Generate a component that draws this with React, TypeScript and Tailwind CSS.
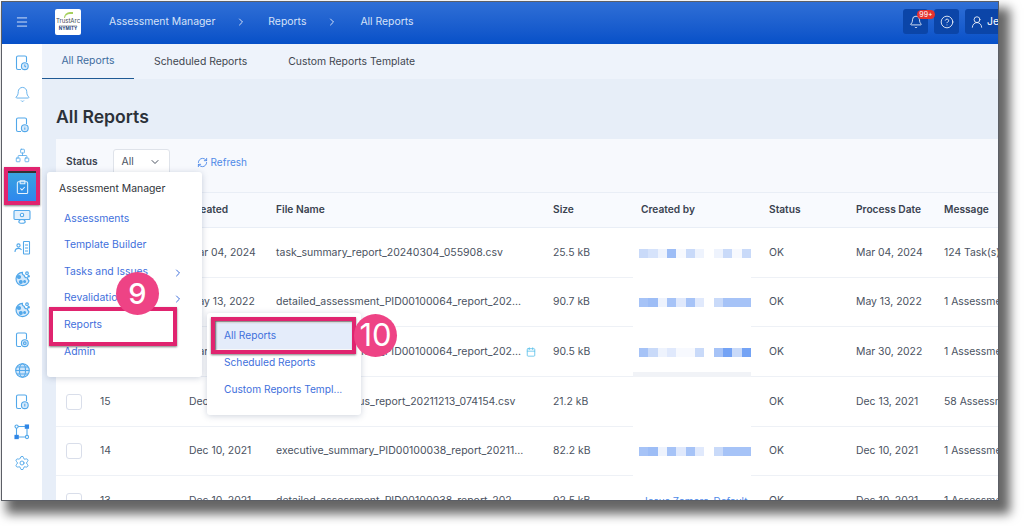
import { Menu, ChevronRight, ChevronDown, Bell, CircleHelp, UserRound, RefreshCw, Calendar, Settings, Network } from "lucide-react";

const font = "font-['Inter','Noto_Sans',sans-serif]";
const blue = "#52a8ea";

const FileBadge = ({ glyph }: { glyph: "clock" | "info" | "at" | "o" }) => (
  <svg width="16" height="16" viewBox="0 0 16 16" fill="none" stroke={blue} strokeWidth="1.1">
    <path d="M7 14.5H4a1.5 1.5 0 0 1-1.5-1.5V2.5A1.5 1.5 0 0 1 4 1h7a1.5 1.5 0 0 1 1.5 1.5V7" />
    <circle cx="10.8" cy="11.2" r="3.4" fill="#d5e9fb" />
    {glyph === "clock" && <path d="M10.8 9.5v1.8l1.2.7" />}
    {glyph === "info" && <path d="M10.8 10.6v2.2M10.8 9.4v.3" />}
    {glyph === "at" && <circle cx="10.8" cy="11.2" r="1.3" />}
    {glyph === "o" && <path d="M10.8 9.8v2.8" />}
  </svg>
);

const Screen = () => (
  <svg width="18" height="16" viewBox="0 0 18 16" fill="none" stroke={blue} strokeWidth="1.1">
    <rect x="1" y="1.5" width="16" height="9" rx="1" fill="#e3f0fc" />
    <circle cx="9" cy="6" r="1.7" fill="white" />
    <path d="M5.8 13c0-3.4 6.4-3.4 6.4 0 0 1.6-6.4 1.6-6.4 0z" fill="white" />
  </svg>
);

const PersonList = () => (
  <svg width="17" height="16" viewBox="0 0 17 16" fill="none" stroke={blue} strokeWidth="1.1">
    <circle cx="4.5" cy="5.5" r="1.6" />
    <path d="M1 12c0-3 2-3.6 3.5-3.6S7 9 7.5 10" />
    <rect x="9.5" y="1.5" width="6" height="12.5" rx=".6" />
    <path d="M11 5h3M11 8h3M11 11h3" />
  </svg>
);

const Cookie = () => (
  <svg width="17" height="17" viewBox="0 0 17 17" fill="none" stroke={blue} strokeWidth="1.2">
    <path d="M15 10.8A6.6 6.6 0 1 1 8.4 2.4c-.4 1.6.5 2.8 1.8 3 .1 1.7 1.4 2.6 3 2.3.2 1.2.8 2 1.8 3.1z" fill="#d5e9fb" />
    <circle cx="5" cy="7" r="1.5" fill={blue} />
    <circle cx="6.8" cy="12" r="1.4" fill={blue} />
    <circle cx="10.6" cy="11.4" r=".9" fill={blue} />
    <circle cx="13" cy="3.2" r="1.3" />
    <circle cx="14.6" cy="6.2" r=".7" fill={blue} />
  </svg>
);

const Brain = () => (
  <svg width="17" height="17" viewBox="0 0 17 17" fill="#cfe5fa" stroke={blue} strokeWidth="1.1">
    <circle cx="8.5" cy="8.5" r="6.8" />
    <ellipse cx="8.5" cy="8.5" rx="3" ry="6.8" fill="none" />
    <path d="M1.7 8.5h13.6M2.8 5h11.4M2.8 12h11.4" fill="none" />
  </svg>
);

const Nodes = () => (
  <svg width="16" height="16" viewBox="0 0 16 16" fill="none" stroke={blue} strokeWidth="1.1">
    <path d="M4 2.5h8M4 13h8M2.5 4v7.5M13 4v7.5" />
    <circle cx="2.6" cy="2.6" r="1.6" />
    <rect x="11.3" y="1" width="3.2" height="3.2" fill="#2f86e6" stroke="#2f86e6" />
    <rect x="1" y="11.4" width="3.2" height="3.2" fill="#2f86e6" stroke="#2f86e6" />
    <circle cx="13" cy="13" r="1.6" />
  </svg>
);

const Clipboard = () => (
  <svg width="15" height="16" viewBox="0 0 16 17" fill="none" stroke="#e8f3fd" strokeWidth="1.1">
    <rect x="2.5" y="3" width="11" height="12.5" rx="1.2" />
    <path d="M5.5 5V1.8h5V5h-5M5.7 10l1.7 1.7 3-3.2" />
  </svg>
);

const sideIcons = [
  <FileBadge glyph="clock" />,
  <Bell size={17} strokeWidth={1.2} color={blue} />,
  <FileBadge glyph="info" />,
  <Network size={15} strokeWidth={1.3} color={blue} />,
  null,
  <Screen />,
  <PersonList />,
  <Cookie />,
  <Cookie />,
  <FileBadge glyph="at" />,
  <Brain />,
  <FileBadge glyph="o" />,
  <Nodes />,
  <Settings size={16} strokeWidth={1.4} color={blue} />,
];

const p = {
  a: "bg-[#c9daf9]", b: "bg-[#d6e3fb]", c: "bg-[#eef3fd]", d: "bg-[#9dbdf6]", e: "bg-[#f7f9fe]",
  f: "bg-[#b5cdf8]", g: "bg-[#e0e9fc]", h: "bg-[#74a3f5]", i: "bg-white", j: "bg-[#a6c3f7]",
};

const row1 = [p.a, p.b, p.c, p.d, p.e, p.a, p.c, p.i, p.c, p.a, p.e, p.a];
const row2 = [p.j, p.d, p.c, p.j, p.g, p.j, p.g, p.i, p.a, p.j, p.j, p.j];
const row3 = [p.j, p.a, p.c, p.g, p.e, p.e, p.a, p.i, p.j, p.h, p.a, p.h];

const rows = [
  { id: "18", created: "Mar 04, 2024", file: "task_summary_report_20240304_055908.csv", size: "25.5 kB", by: row1, date: "Mar 04, 2024", msg: "124 Task(s) exported" },
  { id: "17", created: "May 13, 2022", file: "detailed_assessment_PID00100064_report_202...", size: "90.7 kB", by: row2, date: "May 13, 2022", msg: "1 Assessment exported" },
  { id: "16", created: "Mar 30, 2022", file: "detailed_assessment_PID00100064_report_202...", size: "90.5 kB", by: row3, date: "Mar 30, 2022", msg: "1 Assessment exported", cal: true, band: true },
  { id: "15", created: "Dec 13, 2021", file: "assessment_status_report_20211213_074154.csv", size: "21.2 kB", date: "Dec 13, 2021", msg: "58 Assessments exported" },
  { id: "14", created: "Dec 10, 2021", file: "executive_summary_PID00100038_report_20211...", size: "82.2 kB", by: row2, date: "Dec 10, 2021", msg: "1 Assessment exported" },
  { id: "13", created: "Dec 10, 2021", file: "detailed_assessment_PID00100038_report_202...", size: "92.5 kB", link: "Jesus Zamora-Default", date: "Dec 10, 2021", msg: "1 Assessment exported" },
];

const cols = "grid grid-cols-[44px_89px_87px_277px_88px_128px_87px_88px_1fr]";

export default function App() {
  return (
    <div className={`relative h-[526px] w-[1024px] overflow-hidden bg-white ${font} text-[10.4px] text-[#4a5261]`}>
      <div className="ml-px mt-px flex h-[500px] w-[998px] flex-col overflow-hidden border border-[#5c5f66] shadow-[8px_10px_10px_3px_rgba(0,0,0,0.6)]">
        {/* top bar */}
        <header className="flex h-[42px] shrink-0 items-center bg-gradient-to-b from-[#2f6fd6] to-[#0650c8] pb-[3px] text-white">
          <div className="flex w-[40px] justify-center">
            <Menu size={14} strokeWidth={1.5} className="text-[#eaf1fd]" />
          </div>
          <div className="ml-[13px] flex h-[26px] w-[26px] flex-col items-center justify-center rounded-[2px] bg-white leading-none">
            <div className="h-[6px] w-[9px] rounded-tl-full border-t-2 border-l border-[#a5cf5c]" />
            <span className="text-[6px] text-[#3f4a55]">TrustArc</span>
            <span className="mt-[1px] border-t border-[#ccc] pt-px text-[4.5px] font-bold text-[#1e3f7a]">NYMITY</span>
          </div>
          <span className="ml-[28px] text-[#d6e2f8]">Assessment Manager</span>
          <ChevronRight size={12} className="ml-[20px] text-[#d6e2f8]" />
          <span className="ml-[21px] text-[#d6e2f8]">Reports</span>
          <ChevronRight size={12} className="ml-[20px] text-[#d6e2f8]" />
          <span className="ml-[22px] text-[#d6e2f8]">All Reports</span>
          <div className="ml-auto flex items-center gap-[6px]">
            <div className="relative flex h-[25px] w-[25px] items-center justify-center rounded-[3px] bg-[#0b45a8]">
              <Bell size={14} strokeWidth={1.4} />
              <span className="absolute top-px left-[14px] w-[18px] rounded-full bg-[#e5322d] text-center text-[7px] leading-[9px]">99+</span>
            </div>
            <div className="flex h-[25px] w-[25px] items-center justify-center rounded-[3px] bg-[#0b45a8]">
              <CircleHelp size={14} strokeWidth={1.4} />
            </div>
            <div className="flex h-[25px] w-[33px] items-center gap-[3px] overflow-hidden rounded-l-[3px] bg-[#0b45a8] pl-[5px]">
              <UserRound size={14} strokeWidth={1.4} className="shrink-0" />
              <span>Jesus</span>
            </div>
          </div>
        </header>

        <div className="flex min-h-0 flex-1">
          {/* left rail */}
          <aside className="flex w-[40px] shrink-0 flex-col items-center bg-white pt-[4px]">
            {sideIcons.map((icon, i) =>
              icon ? (
                <div key={i} className="flex h-[30.75px] w-full items-center justify-center">{icon}</div>
              ) : (
                <div key={i} className="flex h-[30.75px] w-[31px] items-center justify-center border-t-2 border-[#333] bg-gradient-to-b from-[#3aa2e0] to-[#2e86ee]">
                  <Clipboard />
                </div>
              )
            )}
          </aside>

          <main className="min-w-0 flex-1 bg-[#e7eef8]">
            {/* tabs */}
            <nav className="flex h-[35px] items-center bg-[#eef3fb]">
              <div className="flex h-[35px] w-[92px] items-center justify-center border-b border-[#1f5a94] text-[#3e6c9e]">All Reports</div>
              <span className="ml-[20px] text-[#3f4650]">Scheduled Reports</span>
              <span className="ml-[41px] text-[#3f4650]">Custom Reports Template</span>
            </nav>

            <h1 className="ml-[14px] mt-[24px] text-[17.6px] leading-[28px] font-semibold text-[#2c3138]">All Reports</h1>

            <section className="ml-[14px] mt-[8px] bg-white">
              <div className="flex h-[53px] items-center bg-[#f7f9fd] pb-[7px] pl-[10px]">
                <span className="text-[10.2px] font-semibold text-[#3a4250]">Status</span>
                <div className="ml-[15px] flex h-[26px] w-[57px] items-center justify-between rounded-[3px] border border-[#dfe3ea] bg-white px-[8px]">
                  All
                  <ChevronDown size={12} />
                </div>
                <RefreshCw size={11} className="ml-[27px] text-[#4f8ae8]" />
                <span className="ml-[3px] text-[10px] text-[#4f8ae8]">Refresh</span>
              </div>

              <div className={`${cols} h-[36px] items-center border-y border-[#e9eef6] bg-[#f8fafe] text-[10.2px] font-semibold text-[#3a4250]`}>
                <span />
                <span />
                <span>Created</span>
                <span>File Name</span>
                <span>Size</span>
                <span>Created by</span>
                <span>Status</span>
                <span>Process Date</span>
                <span>Message</span>
              </div>

              {rows.map((r) => (
                <div key={r.id} className={`${cols} h-[49.7px] items-center whitespace-nowrap border-b border-[#eef1f6] bg-white`}>
                  <div className="ml-[10px] h-[16px] w-[16px] rounded-[3px] border border-[#d9deea] bg-white" />
                  <span>{r.id}</span>
                  <span>{r.created}</span>
                  <span className="flex items-center gap-[5px] text-[10.5px]">
                    {r.file}
                    {r.cal && <Calendar size={10} className="text-[#5cc0ea]" />}
                  </span>
                  <span>{r.size}</span>
                  <div className="relative -mb-px -ml-2 flex h-[50px] w-[118px] items-center bg-white pl-[6px]">
                    {r.by && (
                      <div className="flex">
                        {r.by.map((c, i) => (
                          <div key={i} className={`h-[9px] w-[9.33px] ${c}`} />
                        ))}
                      </div>
                    )}
                    {r.link && <span className="pl-[3px] text-[10px] text-[#4f8ae8]">{r.link}</span>}
                    {r.band && <div className="absolute bottom-[-4px] left-0 h-[9px] w-full bg-[#f1f3f7]" />}
                  </div>
                  <span>OK</span>
                  <span>{r.date}</span>
                  <span className="overflow-hidden">{r.msg}</span>
                </div>
              ))}
            </section>
          </main>
        </div>
      </div>

      {/* flyout menu */}
      <div className="absolute left-[47px] top-[172px] h-[205px] w-[155px] rounded-[3px] bg-white shadow-[0_1px_6px_rgba(60,80,120,0.25)]">
        <p className="ml-[12px] mt-[9px] text-[#30343a]">Assessment Manager</p>
        <ul className="ml-[17px] mt-[14px] text-[#3f70dc]">
          <li className="h-[26.6px]">Assessments</li>
          <li className="h-[26.6px]">Template Builder</li>
          <li className="flex h-[26.6px] items-start justify-between pr-[18px]">Tasks and Issues <ChevronRight size={12} className="mt-[3px]" /></li>
          <li className="flex h-[26.6px] items-start justify-between pr-[18px]">Revalidations <ChevronRight size={12} className="mt-[3px]" /></li>
          <li className="h-[26.6px]">Reports</li>
          <li>Admin</li>
        </ul>
      </div>

      {/* sub menu */}
      <div className="absolute left-[207px] top-[313px] h-[102px] w-[154px] rounded-[3px] bg-white text-[10.2px] text-[#3f70dc] shadow-[0_1px_6px_rgba(60,80,120,0.25)]">
        <div className="ml-[5px] mt-[10px] flex h-[26px] w-[142px] items-center bg-[#e4ecfa] pl-[12px]">All Reports</div>
        <div className="ml-[17px] mt-[6px] h-[27px]">Scheduled Reports</div>
        <div className="ml-[17px]">Custom Reports Templ...</div>
      </div>

      {/* tutorial annotations */}
      <div className="absolute left-[4px] top-[167px] h-[38px] w-[36px] border-[4px] border-[#e0246f] shadow-[0_1px_2px_rgba(0,0,0,0.5)]" />
      <div className="absolute left-[49px] top-[307px] h-[39px] w-[128px] border-[4px] border-[#e0246f] shadow-[0_1px_2px_rgba(0,0,0,0.5)]" />
      <div className="absolute left-[211px] top-[317px] h-[37px] w-[145px] border-[4px] border-[#e0246f] shadow-[inset_1px_1px_2px_rgba(0,0,0,0.6),0_1px_2px_rgba(0,0,0,0.5)]" />
      <div className="absolute left-[116px] top-[272px] flex h-[43px] w-[43px] items-center justify-center rounded-full bg-[#ee4385] text-[29px] font-medium text-white">9</div>
      <div className="absolute left-[354px] top-[314px] flex h-[43px] w-[43px] items-center justify-center rounded-full bg-[#ee4385] text-[31px] font-normal text-white">10</div>
    </div>
  );
}
